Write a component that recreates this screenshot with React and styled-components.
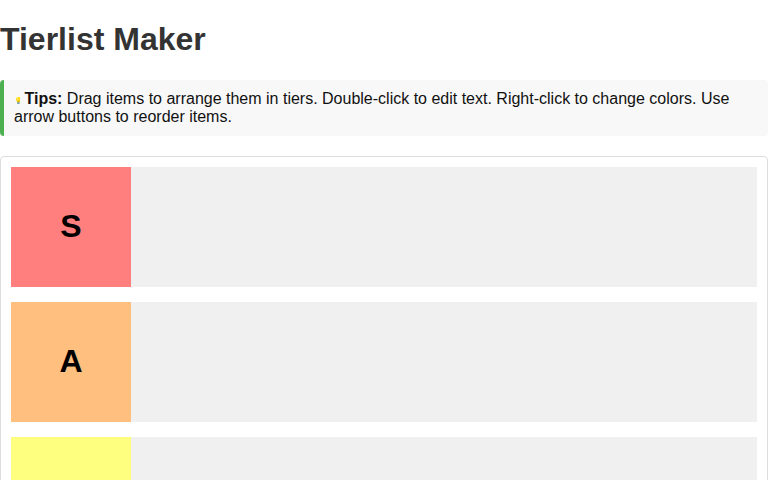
import React from 'react';
import styled, { createGlobalStyle } from 'styled-components';

const GlobalStyle = createGlobalStyle`
  body {
    margin: 0;
    font-family: "Liberation Sans", Arial, sans-serif;
    background: #fff;
  }
`;

const Page = styled.div`
  color: #333;
`;

const Title = styled.h1`
  font-size: 32px;
  font-weight: bold;
  margin: 0.67em 0;
  color: #333;
`;

const Tips = styled.div`
  background: #f8f8f8;
  border-left: 4px solid #4caf50;
  border-radius: 4px;
  padding: 10px;
  font-size: 16px;
  line-height: 18px;
  color: #111;
  margin-bottom: 20px;
`;

const Bulb = styled.span`
  display: inline-block;
  width: 6px;
  font-size: 7px;
  line-height: 1;
  overflow: hidden;
`;

const Board = styled.div`
  border: 1px solid #ddd;
  border-radius: 4px;
  padding: 10px;
`;

const Row = styled.div`
  display: flex;
  background: #f0f0f0;
  min-height: 120px;
  margin-bottom: 15px;
`;

const Label = styled.div`
  width: 120px;
  flex: 0 0 120px;
  display: flex;
  align-items: center;
  justify-content: center;
  background: ${(p) => p.color};
  font-size: 32px;
  font-weight: bold;
  color: #000;
`;

const Items = styled.div`
  flex: 1;
  display: flex;
  flex-wrap: wrap;
`;

const tiers = [
  { name: 'S', color: '#ff7f7f' },
  { name: 'A', color: '#ffbf7f' },
  { name: 'B', color: '#ffff7f' },
  { name: 'C', color: '#7fff7f' },
];

const App = () => (
  <Page>
    <GlobalStyle />
    <Title>Tierlist Maker</Title>
    <Tips>
      <Bulb>💡</Bulb> <strong>Tips:</strong> Drag items to arrange them in tiers. Double-click to edit text. Right-click to change colors. Use arrow buttons to reorder items.
    </Tips>
    <Board>
      {tiers.map((t) => (
        <Row key={t.name}>
          <Label color={t.color}>{t.name}</Label>
          <Items />
        </Row>
      ))}
    </Board>
  </Page>
);

export default App;
